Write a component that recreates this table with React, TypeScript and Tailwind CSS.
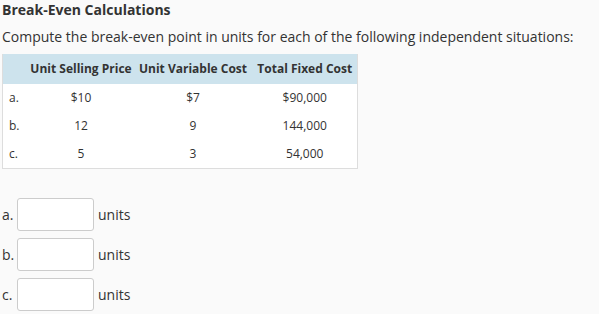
import React from 'react'

const rows = [
  { label: 'a.', price: '$10', variable: '$7', fixed: '$90,000' },
  { label: 'b.', price: '12', variable: '9', fixed: '144,000' },
  { label: 'c.', price: '5', variable: '3', fixed: '54,000' },
]

export default function App() {
  return (
    <main className="min-h-screen bg-[#fafafa] text-[#333] px-[2px] pt-[1px]" style={{ fontFamily: '"Open Sans", sans-serif' }}>
      <h1 className="text-[14px] font-bold leading-[18px]">Break-Even Calculations</h1>
      <p className="text-[14px] leading-[20px] mt-[8px]">
        Compute the break-even point in units for each of the following independent situations:
      </p>

      <table className="mt-[7px] w-[355px] table-fixed border border-[#ddd] border-t-0 bg-white text-[12px] border-collapse">
        <colgroup>
          <col className="w-[26px]" />
          <col className="w-[105px]" />
          <col className="w-[119px]" />
          <col className="w-[105px]" />
        </colgroup>
        <thead>
          <tr className="bg-[#cde3ed] h-[30px]">
            <th></th>
            <th className="font-bold text-center whitespace-nowrap">Unit Selling Price</th>
            <th className="font-bold text-center whitespace-nowrap">Unit Variable Cost</th>
            <th className="font-bold text-center whitespace-nowrap">Total Fixed Cost</th>
          </tr>
        </thead>
        <tbody>
          {rows.map(r => (
            <tr key={r.label} className="h-[28px]">
              <td className="pl-[6px] text-left">{r.label}</td>
              <td className="text-center">{r.price}</td>
              <td className="text-center">{r.variable}</td>
              <td className="text-center">{r.fixed}</td>
            </tr>
          ))}
        </tbody>
      </table>

      <div className="mt-[29px] flex flex-col gap-[7px]">
        {rows.map(r => (
          <div key={r.label} className="flex items-center">
            <span className="w-[15px] text-[14px]">{r.label}</span>
            <input className="w-[77px] h-[33px] bg-white border border-[#ccc] rounded-[3px]" />
            <span className="ml-[4px] text-[14px]">units</span>
          </div>
        ))}
      </div>
    </main>
  )
}
